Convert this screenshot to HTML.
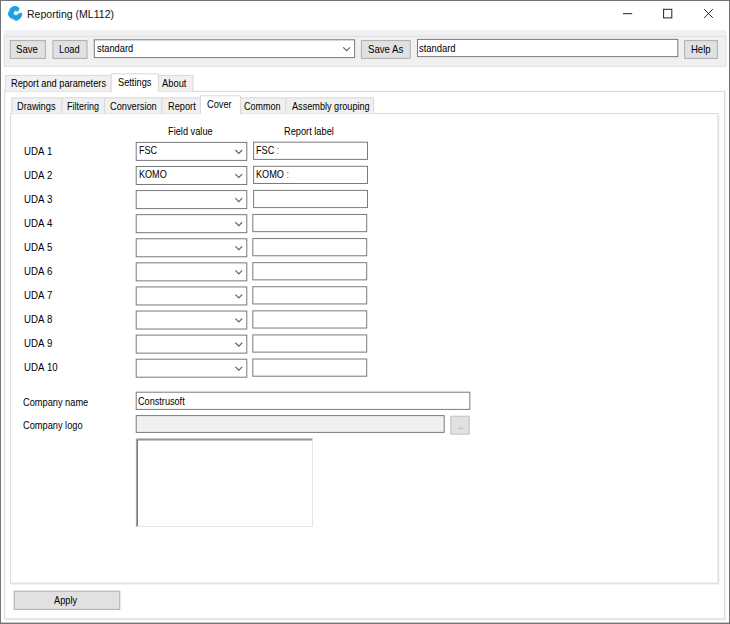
<!DOCTYPE html>
<html><head><meta charset="utf-8"><title>Reporting (ML112)</title>
<style>
html,body{margin:0;padding:0;background:#fff;}
body{width:730px;height:624px;position:relative;overflow:hidden;font-family:"Liberation Sans",sans-serif;}
svg{position:absolute;left:0;top:0;}
.t{position:absolute;white-space:nowrap;transform-origin:0 0;display:inline-block;line-height:normal;}
</style></head><body>
<svg width="730" height="624" viewBox="0 0 730 624">
<rect x="0.5" y="0.5" width="729.0" height="623.0" fill="#fff" stroke="#747474" stroke-width="1"/>
<rect x="0" y="622.6" width="730" height="1.4" fill="#747474"/>
<path d="M18.8 9.7 L19.0 8.0 L16.6 6.5 L13.4 6.5 L10.9 8.0 L9.5 10.4 L8.3 13.2 L9.0 16.2 L11.2 18.2 L13.7 19.2 L15.9 20.4 L18.4 19.7 L20.8 17.4 L21.8 14.8 L21.6 13.1 L18.5 13.6 A2.6 2.3 0 1 1 17.6 11.3 Z" fill="#1b9fe3" stroke="#1b9fe3" stroke-width="0.8" stroke-linejoin="round"/>
<path d="M9.6 9.6 L8.6 12.6 M12 18.6 L14.4 19.4" fill="none" stroke="#7fcbf1" stroke-width="0.6"/>
<path d="M623 13.7 H632.2" fill="none" stroke="#222" stroke-width="1"/>
<rect x="663.6" y="9.3" width="8.2" height="8.6" fill="none" stroke="#222" stroke-width="1"/>
<path d="M704.2 9.2 L712.8 17.9 M712.8 9.2 L704.2 17.9" fill="none" stroke="#222" stroke-width="1"/>
<rect x="3.8" y="30.2" width="722.6" height="36.6" fill="#f0f0f0"/>
<rect x="4.3" y="36.3" width="721.7" height="30.0" fill="none" stroke="#dfdfdf" stroke-width="1"/>
<rect x="10.2" y="40.6" width="35.2" height="17.8" fill="#e1e1e1" stroke="#adadad" stroke-width="1"/>
<rect x="53" y="40.6" width="34" height="17.8" fill="#e1e1e1" stroke="#adadad" stroke-width="1"/>
<rect x="94.3" y="39.8" width="260.3" height="17.8" fill="#fff" stroke="#7a7a7a" stroke-width="1"/>
<path d="M343.2 47.3 L346.6 50.7 L350.0 47.3" fill="none" stroke="#626262" stroke-width="1.15"/>
<rect x="361.4" y="40.6" width="48.8" height="17.8" fill="#e1e1e1" stroke="#adadad" stroke-width="1"/>
<rect x="417.5" y="39.4" width="260.3" height="17.2" fill="#fff" stroke="#7a7a7a" stroke-width="1"/>
<rect x="684.6" y="40.6" width="32.8" height="17.8" fill="#e1e1e1" stroke="#adadad" stroke-width="1"/>
<rect x="5.6" y="92.4" width="720.6" height="528.0" fill="#f1f1f1"/>
<rect x="4.6" y="91.4" width="720.0" height="527.4" fill="#fff" stroke="#d9d9d9" stroke-width="1"/>
<rect x="5.2" y="75.4" width="106.0" height="16.0" fill="#f0f0f0"/>
<path d="M5.2 91.4 V75.4 H111.2 V91.4" fill="none" stroke="#d9d9d9" stroke-width="1"/>
<rect x="158.4" y="75.4" width="34.6" height="16.0" fill="#f0f0f0"/>
<path d="M158.4 91.4 V75.4 H193 V91.4" fill="none" stroke="#d9d9d9" stroke-width="1"/>
<rect x="111.2" y="73.8" width="47.2" height="19.6" fill="#fff"/>
<path d="M111.2 91.9 V73.8 H158.4 V91.9" fill="none" stroke="#d9d9d9" stroke-width="1"/>
<rect x="11.6" y="114.6" width="708.0" height="470.2" fill="#f1f1f1"/>
<rect x="10.6" y="113.6" width="707.4" height="469.6" fill="#fff" stroke="#d9d9d9" stroke-width="1"/>
<rect x="11.8" y="97.8" width="50.0" height="15.8" fill="#f0f0f0"/>
<path d="M11.8 113.6 V97.8 H61.8 V113.6" fill="none" stroke="#d9d9d9" stroke-width="1"/>
<rect x="61.8" y="97.8" width="42.6" height="15.8" fill="#f0f0f0"/>
<path d="M61.8 113.6 V97.8 H104.4 V113.6" fill="none" stroke="#d9d9d9" stroke-width="1"/>
<rect x="104.4" y="97.8" width="57.6" height="15.8" fill="#f0f0f0"/>
<path d="M104.4 113.6 V97.8 H162 V113.6" fill="none" stroke="#d9d9d9" stroke-width="1"/>
<rect x="162" y="97.8" width="38.4" height="15.8" fill="#f0f0f0"/>
<path d="M162 113.6 V97.8 H200.4 V113.6" fill="none" stroke="#d9d9d9" stroke-width="1"/>
<rect x="240.6" y="97.8" width="45.2" height="15.8" fill="#f0f0f0"/>
<path d="M240.6 113.6 V97.8 H285.8 V113.6" fill="none" stroke="#d9d9d9" stroke-width="1"/>
<rect x="285.8" y="97.8" width="87.8" height="15.8" fill="#f0f0f0"/>
<path d="M285.8 113.6 V97.8 H373.6 V113.6" fill="none" stroke="#d9d9d9" stroke-width="1"/>
<rect x="200.4" y="95.8" width="40.2" height="19.8" fill="#fff"/>
<path d="M200.4 114.1 V95.8 H240.6 V114.1" fill="none" stroke="#d9d9d9" stroke-width="1"/>
<rect x="136.2" y="142.4" width="110.6" height="18.0" fill="#fff" stroke="#7a7a7a" stroke-width="1"/>
<path d="M235.4 150.0 L238.8 153.4 L242.2 150.0" fill="none" stroke="#626262" stroke-width="1.15"/>
<rect x="253.6" y="142.2" width="113.9" height="17.2" fill="#fff" stroke="#7a7a7a" stroke-width="1"/>
<rect x="136.2" y="166.49" width="110.6" height="18.0" fill="#fff" stroke="#7a7a7a" stroke-width="1"/>
<path d="M235.4 174.09 L238.8 177.49 L242.2 174.09" fill="none" stroke="#626262" stroke-width="1.15"/>
<rect x="253.6" y="166.29" width="113.9" height="17.2" fill="#fff" stroke="#7a7a7a" stroke-width="1"/>
<rect x="136.2" y="190.58" width="110.6" height="18.0" fill="#fff" stroke="#7a7a7a" stroke-width="1"/>
<path d="M235.4 198.18 L238.8 201.58 L242.2 198.18" fill="none" stroke="#626262" stroke-width="1.15"/>
<rect x="253.6" y="190.38" width="113.9" height="17.2" fill="#fff" stroke="#7a7a7a" stroke-width="1"/>
<rect x="136.2" y="214.67" width="110.6" height="18.0" fill="#fff" stroke="#7a7a7a" stroke-width="1"/>
<path d="M235.4 222.27 L238.8 225.67 L242.2 222.27" fill="none" stroke="#626262" stroke-width="1.15"/>
<rect x="252.8" y="214.47" width="113.9" height="17.2" fill="#fff" stroke="#7a7a7a" stroke-width="1"/>
<rect x="136.2" y="238.76" width="110.6" height="18.0" fill="#fff" stroke="#7a7a7a" stroke-width="1"/>
<path d="M235.4 246.36 L238.8 249.76 L242.2 246.36" fill="none" stroke="#626262" stroke-width="1.15"/>
<rect x="252.8" y="238.56" width="113.9" height="17.2" fill="#fff" stroke="#7a7a7a" stroke-width="1"/>
<rect x="136.2" y="262.85" width="110.6" height="18.0" fill="#fff" stroke="#7a7a7a" stroke-width="1"/>
<path d="M235.4 270.45 L238.8 273.85 L242.2 270.45" fill="none" stroke="#626262" stroke-width="1.15"/>
<rect x="252.8" y="262.65" width="113.9" height="17.2" fill="#fff" stroke="#7a7a7a" stroke-width="1"/>
<rect x="136.2" y="286.94" width="110.6" height="18.0" fill="#fff" stroke="#7a7a7a" stroke-width="1"/>
<path d="M235.4 294.54 L238.8 297.94 L242.2 294.54" fill="none" stroke="#626262" stroke-width="1.15"/>
<rect x="252.8" y="286.74" width="113.9" height="17.2" fill="#fff" stroke="#7a7a7a" stroke-width="1"/>
<rect x="136.2" y="311.03" width="110.6" height="18.0" fill="#fff" stroke="#7a7a7a" stroke-width="1"/>
<path d="M235.4 318.63 L238.8 322.03 L242.2 318.63" fill="none" stroke="#626262" stroke-width="1.15"/>
<rect x="252.8" y="310.83" width="113.9" height="17.2" fill="#fff" stroke="#7a7a7a" stroke-width="1"/>
<rect x="136.2" y="335.12" width="110.6" height="18.0" fill="#fff" stroke="#7a7a7a" stroke-width="1"/>
<path d="M235.4 342.72 L238.8 346.12 L242.2 342.72" fill="none" stroke="#626262" stroke-width="1.15"/>
<rect x="252.8" y="334.92" width="113.9" height="17.2" fill="#fff" stroke="#7a7a7a" stroke-width="1"/>
<rect x="136.2" y="359.21" width="110.6" height="18.0" fill="#fff" stroke="#7a7a7a" stroke-width="1"/>
<path d="M235.4 366.81 L238.8 370.21 L242.2 366.81" fill="none" stroke="#626262" stroke-width="1.15"/>
<rect x="252.8" y="359.01" width="113.9" height="17.2" fill="#fff" stroke="#7a7a7a" stroke-width="1"/>
<rect x="136.2" y="392.2" width="333.6" height="17.2" fill="#fff" stroke="#7a7a7a" stroke-width="1"/>
<rect x="136.2" y="415.6" width="308.0" height="16.8" fill="#f0f0f0" stroke="#7a7a7a" stroke-width="1"/>
<rect x="450.8" y="416.2" width="18.4" height="18.0" fill="#e1e1e1" stroke="#bfbfbf" stroke-width="1"/>
<rect x="135.9" y="438.4" width="177.1" height="88.6" fill="#fff"/>
<path d="M136.4 527 V438.9 H313" fill="none" stroke="#a0a0a0" stroke-width="1"/>
<path d="M137.4 526 V439.9 H312" fill="none" stroke="#696969" stroke-width="1"/>
<path d="M136.9 526.5 H312.5 V439.4" fill="none" stroke="#e6e6e6" stroke-width="1"/>
<rect x="14.2" y="591.2" width="105.6" height="18.2" fill="#e1e1e1" stroke="#adadad" stroke-width="1"/>
</svg>
<span class="t" id="title" style="left:26.6px;top:8.25px;font-size:10.7px;transform:scaleX(0.985);color:#111;">Reporting (ML112)</span>
<span class="t" id="save" style="left:16px;top:43.47px;font-size:11px;transform:scaleX(0.875);color:#000;">Save</span>
<span class="t" id="load" style="left:59.4px;top:43.47px;font-size:11px;transform:scaleX(0.845);color:#000;">Load</span>
<span class="t" id="std1" style="left:96.89999999999999px;top:42.37px;font-size:11px;transform:scaleX(0.845);color:#000;">standard</span>
<span class="t" id="saveas" style="left:368px;top:43.47px;font-size:11px;transform:scaleX(0.875);color:#000;">Save As</span>
<span class="t" id="std2" style="left:419.2px;top:41.97px;font-size:11px;transform:scaleX(0.855);color:#000;">standard</span>
<span class="t" id="help" style="left:691px;top:43.47px;font-size:11px;transform:scaleX(0.865);color:#000;">Help</span>
<span class="t" id="t1" style="left:10.8px;top:77.37px;font-size:11px;transform:scaleX(0.84);color:#000;">Report and parameters</span>
<span class="t" id="t3" style="left:162.2px;top:77.37px;font-size:11px;transform:scaleX(0.85);color:#000;">About</span>
<span class="t" id="t2" style="left:118.4px;top:76.17px;font-size:11px;transform:scaleX(0.84);color:#000;">Settings</span>
<span class="t" id="i0" style="left:16.8px;top:99.87px;font-size:11px;transform:scaleX(0.84);color:#000;">Drawings</span>
<span class="t" id="i1" style="left:66.6px;top:99.87px;font-size:11px;transform:scaleX(0.815);color:#000;">Filtering</span>
<span class="t" id="i2" style="left:109.7px;top:99.87px;font-size:11px;transform:scaleX(0.84);color:#000;">Conversion</span>
<span class="t" id="i3" style="left:168px;top:99.87px;font-size:11px;transform:scaleX(0.84);color:#000;">Report</span>
<span class="t" id="i4" style="left:243.8px;top:99.87px;font-size:11px;transform:scaleX(0.815);color:#000;">Common</span>
<span class="t" id="i5" style="left:292.4px;top:99.87px;font-size:11px;transform:scaleX(0.83);color:#000;">Assembly grouping</span>
<span class="t" id="cover" style="left:207px;top:98.07px;font-size:11px;transform:scaleX(0.84);color:#000;">Cover</span>
<span class="t" id="h1" style="left:168px;top:124.87px;font-size:11px;transform:scaleX(0.84);color:#000;">Field value</span>
<span class="t" id="h2" style="left:284px;top:124.87px;font-size:11px;transform:scaleX(0.84);color:#000;">Report label</span>
<span class="t" id="u0" style="left:23.7px;top:144.67px;font-size:11px;transform:scaleX(0.875);color:#000;word-spacing:.6px">UDA 1</span>
<span class="t" id="c0" style="left:138.79999999999998px;top:144.27px;font-size:11px;transform:scaleX(0.825);color:#000;">FSC</span>
<span class="t" id="x0" style="left:256.2px;top:144.27px;font-size:11px;transform:scaleX(0.83);color:#000;">FSC <span style="color:#6e5f68">:</span></span>
<span class="t" id="u1" style="left:23.7px;top:168.76px;font-size:11px;transform:scaleX(0.875);color:#000;word-spacing:.6px">UDA 2</span>
<span class="t" id="c1" style="left:138.79999999999998px;top:168.36px;font-size:11px;transform:scaleX(0.825);color:#000;">KOMO</span>
<span class="t" id="x1" style="left:256.2px;top:168.36px;font-size:11px;transform:scaleX(0.83);color:#000;">KOMO <span style="color:#6e5f68">:</span></span>
<span class="t" id="u2" style="left:23.7px;top:192.85px;font-size:11px;transform:scaleX(0.875);color:#000;word-spacing:.6px">UDA 3</span>
<span class="t" id="u3" style="left:23.7px;top:216.94px;font-size:11px;transform:scaleX(0.875);color:#000;word-spacing:.6px">UDA 4</span>
<span class="t" id="u4" style="left:23.7px;top:241.03px;font-size:11px;transform:scaleX(0.875);color:#000;word-spacing:.6px">UDA 5</span>
<span class="t" id="u5" style="left:23.7px;top:265.12px;font-size:11px;transform:scaleX(0.875);color:#000;word-spacing:.6px">UDA 6</span>
<span class="t" id="u6" style="left:23.7px;top:289.21px;font-size:11px;transform:scaleX(0.875);color:#000;word-spacing:.6px">UDA 7</span>
<span class="t" id="u7" style="left:23.7px;top:313.3px;font-size:11px;transform:scaleX(0.875);color:#000;word-spacing:.6px">UDA 8</span>
<span class="t" id="u8" style="left:23.7px;top:337.39px;font-size:11px;transform:scaleX(0.875);color:#000;word-spacing:.6px">UDA 9</span>
<span class="t" id="u9" style="left:23.7px;top:361.48px;font-size:11px;transform:scaleX(0.875);color:#000;word-spacing:.6px">UDA 10</span>
<span class="t" id="cn" style="left:22.8px;top:395.77px;font-size:11px;transform:scaleX(0.84);color:#000;">Company name</span>
<span class="t" id="cs" style="left:137.89999999999998px;top:394.67px;font-size:11px;transform:scaleX(0.83);color:#000;">Construsoft</span>
<span class="t" id="cl" style="left:22.8px;top:418.77px;font-size:11px;transform:scaleX(0.84);color:#000;">Company logo</span>
<span class="t" id="dots" style="left:457.8px;top:418.87px;font-size:11px;transform:scaleX(0.84);color:#8a8a8a;">..</span>
<span class="t" id="apply" style="left:54.4px;top:594.27px;font-size:11px;transform:scaleX(0.84);color:#000;">Apply</span>
</body></html>
